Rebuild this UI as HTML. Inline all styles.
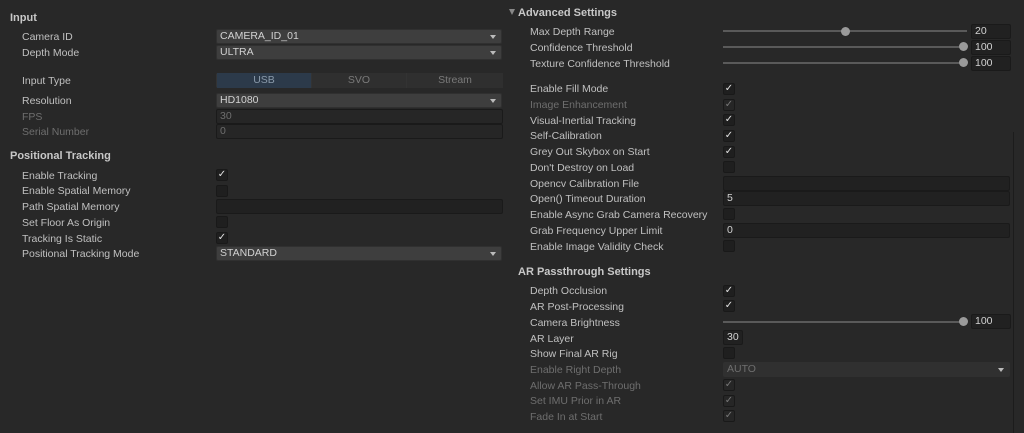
<!DOCTYPE html><html><head><style>
body{margin:0;width:1024px;height:433px;background:#282828;overflow:hidden;position:relative;font-family:"Liberation Sans",sans-serif;font-size:10.5px;color:#c0c0c0}
div{position:absolute;box-sizing:border-box}
.l{line-height:16px;white-space:nowrap;margin-top:1px}
.h{font-weight:bold;color:#c8c8c8;font-size:11px}
.d{color:#6e6e6e}
.cb{width:12px;height:12px;background:#1f1f1f;border:1px solid #191919;border-radius:2px;color:#e0e0e0;font-size:10px;line-height:10px;text-align:center}
.cb.dis{color:#777;background:#262626}
.dd{height:15px;background:#3e3e3e;border:1px solid #303030;border-radius:2px;line-height:13px;padding-left:3px;color:#d2d2d2}
.dd::after{content:"";position:absolute;right:5px;top:5px;border-left:3px solid transparent;border-right:3px solid transparent;border-top:4px solid #bbb}
.tf{height:15px;background:#212121;border:1px solid #1a1a1a;border-radius:2px;line-height:13px;padding-left:3px;color:#d2d2d2}
.tr{height:2px;background:#5a5a5a}
.kn{width:9px;height:9px;border-radius:50%;background:#9a9a9a}
</style></head><body>
<div class="l h" style="left:10px;top:9px">Input</div>
<div class="l" style="left:22px;top:28px">Camera ID</div><div class="dd" style="left:216px;top:29px;width:286px">CAMERA_ID_01</div>
<div class="l" style="left:22px;top:44px">Depth Mode</div><div class="dd" style="left:216px;top:45px;width:286px">ULTRA</div>
<div class="l" style="left:22px;top:72px">Input Type</div>
<div style="left:216px;top:73px;width:287px;height:15px;background:#333;border-radius:2px"></div>
<div style="left:217px;top:73px;width:94px;height:15px;background:#2c3a4a;text-align:center;line-height:15px;color:#8a9aab">USB</div>
<div style="left:312px;top:73px;width:94px;height:15px;background:#2f2f2f;text-align:center;line-height:15px;color:#7a7a7a">SVO</div>
<div style="left:407px;top:73px;width:96px;height:15px;background:#2f2f2f;text-align:center;line-height:15px;color:#7a7a7a">Stream</div>
<div class="l" style="left:22px;top:92px">Resolution</div><div class="dd" style="left:216px;top:93px;width:286px">HD1080</div>
<div class="l d" style="left:22px;top:108px">FPS</div><div class="tf" style="left:216px;top:109px;width:287px;color:#6e6e6e;background:#262626">30</div>
<div class="l d" style="left:22px;top:123px">Serial Number</div><div class="tf" style="left:216px;top:124px;width:287px;color:#6e6e6e;background:#262626">0</div>
<div class="l h" style="left:10px;top:147px">Positional Tracking</div>
<div class="l" style="left:22px;top:167px">Enable Tracking</div><div class="cb" style="left:216px;top:169px">✓</div>
<div class="l" style="left:22px;top:182px">Enable Spatial Memory</div><div class="cb" style="left:216px;top:185px"></div>
<div class="l" style="left:22px;top:198px">Path Spatial Memory</div><div class="tf" style="left:216px;top:199px;width:287px"></div>
<div class="l" style="left:22px;top:214px">Set Floor As Origin</div><div class="cb" style="left:216px;top:216px"></div>
<div class="l" style="left:22px;top:230px">Tracking Is Static</div><div class="cb" style="left:216px;top:232px">✓</div>
<div class="l" style="left:22px;top:245px">Positional Tracking Mode</div><div class="dd" style="left:216px;top:246px;width:286px">STANDARD</div>

<div style="left:509px;top:9px;border-left:3.5px solid transparent;border-right:3.5px solid transparent;border-top:6px solid #888"></div>
<div class="l h" style="left:518px;top:4px">Advanced Settings</div>
<div class="l" style="left:530px;top:23px">Max Depth Range</div><div class="tr" style="left:723px;top:30px;width:244px"></div><div class="kn" style="left:841px;top:27px"></div><div class="tf" style="left:971px;top:24px;width:40px">20</div>
<div class="l" style="left:530px;top:39px">Confidence Threshold</div><div class="tr" style="left:723px;top:46px;width:244px"></div><div class="kn" style="left:959px;top:42px"></div><div class="tf" style="left:971px;top:40px;width:40px">100</div>
<div class="l" style="left:530px;top:55px">Texture Confidence Threshold</div><div class="tr" style="left:723px;top:62px;width:244px"></div><div class="kn" style="left:959px;top:58px"></div><div class="tf" style="left:971px;top:56px;width:40px">100</div>
<div class="l" style="left:530px;top:80px">Enable Fill Mode</div><div class="cb" style="left:723px;top:83px">✓</div>
<div class="l d" style="left:530px;top:96px">Image Enhancement</div><div class="cb dis" style="left:723px;top:99px">✓</div>
<div class="l" style="left:530px;top:112px">Visual-Inertial Tracking</div><div class="cb" style="left:723px;top:114px">✓</div>
<div class="l" style="left:530px;top:127px">Self-Calibration</div><div class="cb" style="left:723px;top:130px">✓</div>
<div class="l" style="left:530px;top:143px">Grey Out Skybox on Start</div><div class="cb" style="left:723px;top:146px">✓</div>
<div class="l" style="left:530px;top:159px">Don't Destroy on Load</div><div class="cb" style="left:723px;top:161px"></div>
<div class="l" style="left:530px;top:175px">Opencv Calibration File</div><div class="tf" style="left:723px;top:176px;width:287px"></div>
<div class="l" style="left:530px;top:190px">Open() Timeout Duration</div><div class="tf" style="left:723px;top:191px;width:287px">5</div>
<div class="l" style="left:530px;top:206px">Enable Async Grab Camera Recovery</div><div class="cb" style="left:723px;top:208px"></div>
<div class="l" style="left:530px;top:222px">Grab Frequency Upper Limit</div><div class="tf" style="left:723px;top:223px;width:287px">0</div>
<div class="l" style="left:530px;top:238px">Enable Image Validity Check</div><div class="cb" style="left:723px;top:240px"></div>
<div class="l h" style="left:518px;top:263px">AR Passthrough Settings</div>
<div class="l" style="left:530px;top:282px">Depth Occlusion</div><div class="cb" style="left:723px;top:285px">✓</div>
<div class="l" style="left:530px;top:298px">AR Post-Processing</div><div class="cb" style="left:723px;top:300px">✓</div>
<div class="l" style="left:530px;top:314px">Camera Brightness</div><div class="tr" style="left:723px;top:321px;width:244px"></div><div class="kn" style="left:959px;top:317px"></div><div class="tf" style="left:971px;top:314px;width:40px">100</div>
<div class="l" style="left:530px;top:330px">AR Layer</div><div class="tf" style="left:723px;top:330px;width:20px">30</div>
<div class="l" style="left:530px;top:345px">Show Final AR Rig</div><div class="cb" style="left:723px;top:347px"></div>
<div class="l d" style="left:530px;top:361px">Enable Right Depth</div><div class="dd" style="left:723px;top:362px;width:287px;background:#303030;color:#6e6e6e">AUTO</div>
<div class="l d" style="left:530px;top:377px">Allow AR Pass-Through</div><div class="cb dis" style="left:723px;top:379px">✓</div>
<div class="l d" style="left:530px;top:392px">Set IMU Prior in AR</div><div class="cb dis" style="left:723px;top:395px">✓</div>
<div class="l d" style="left:530px;top:408px">Fade In at Start</div><div class="cb dis" style="left:723px;top:410px">✓</div>
<div style="left:1013px;top:132px;width:1px;height:301px;background:#1c1c1c"></div>
</body></html>
